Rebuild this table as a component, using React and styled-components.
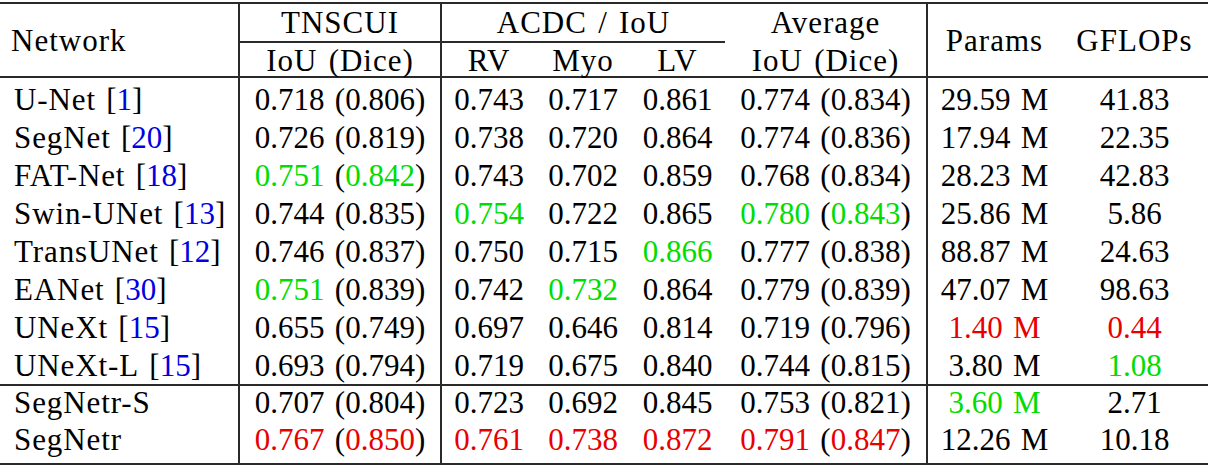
import React from "react";
import styled, { createGlobalStyle } from "styled-components";

const LINE = "#2a2a2a";
const COLORS = { g: "#00dd00", r: "#e80000" };
const SERIF = `"Liberation Serif", "Times New Roman", serif`;

const GlobalStyle = createGlobalStyle`
  html, body { margin: 0; padding: 0; background: #fff; }
  body { font-family: ${SERIF}; color: #000; }
  *, *::before, *::after { box-sizing: border-box; }
`;

const Page = styled.div`
  padding-top: 2px;
`;

const Table = styled.div`
  display: grid;
  width: 1208px;
  grid-template-columns: 238px 202px 96px 94px 95px 203px 133px 147px;
  grid-template-rows: 39px 35px repeat(7, 38px) 42px 35px 44px;
  border-top: 2px solid ${LINE};
  font-family: ${SERIF};
  font-size: 31px;
  line-height: 31px;
  word-spacing: 2.5px;
`;

const Cell = styled.div`
  white-space: nowrap;
  padding-top: ${(p) => p.$pt ?? 0}px;
  padding-left: ${(p) => p.$pl ?? 0}px;
  text-align: ${(p) => p.$align || "center"};
  border-left: ${(p) => (p.$bl ? `2px solid ${LINE}` : "none")};
  border-right: ${(p) => (p.$br ? `2px solid ${LINE}` : "none")};
  border-bottom: ${(p) => (p.$rule ? `2px solid ${LINE}` : "none")};
`;

const HeadCell = styled(Cell)`
  grid-column: ${(p) => p.$col};
  grid-row: ${(p) => p.$row};
  letter-spacing: 1px;
`;

const SpanHead = styled(HeadCell)`
  display: flex;
  align-items: center;
  justify-content: ${(p) => (p.$align === "left" ? "flex-start" : "center")};
  padding-top: 0;
`;

const NameText = styled.span`
  letter-spacing: 0.9px;
`;

const Cite = styled.span`
  color: #0000e0;
`;

const Hl = styled.span`
  color: ${(p) => COLORS[p.$c] || "inherit"};
`;

const Val = ({ v }) => {
  const m = /^([gr]):(.*)$/.exec(v);
  if (m) return <Hl $c={m[1]}>{m[2]}</Hl>;
  return <>{v}</>;
};

const Pair = ({ a, b }) => (
  <>
    <Val v={a} /> (<Val v={b} />)
  </>
);

const rows = [
  ["U-Net", "1", ["0.718", "0.806"], ["0.743", "0.717", "0.861"], ["0.774", "0.834"], "29.59 M", "41.83"],
  ["SegNet", "20", ["0.726", "0.819"], ["0.738", "0.720", "0.864"], ["0.774", "0.836"], "17.94 M", "22.35"],
  ["FAT-Net", "18", ["g:0.751", "g:0.842"], ["0.743", "0.702", "0.859"], ["0.768", "0.834"], "28.23 M", "42.83"],
  ["Swin-UNet", "13", ["0.744", "0.835"], ["g:0.754", "0.722", "0.865"], ["g:0.780", "g:0.843"], "25.86 M", "5.86"],
  ["TransUNet", "12", ["0.746", "0.837"], ["0.750", "0.715", "g:0.866"], ["0.777", "0.838"], "88.87 M", "24.63"],
  ["EANet", "30", ["g:0.751", "0.839"], ["0.742", "g:0.732", "0.864"], ["0.779", "0.839"], "47.07 M", "98.63"],
  ["UNeXt", "15", ["0.655", "0.749"], ["0.697", "0.646", "0.814"], ["0.719", "0.796"], "r:1.40 M", "r:0.44"],
  ["UNeXt-L", "15", ["0.693", "0.794"], ["0.719", "0.675", "0.840"], ["0.744", "0.815"], "3.80 M", "g:1.08"],
  ["SegNetr-S", null, ["0.707", "0.804"], ["0.723", "0.692", "0.845"], ["0.753", "0.821"], "g:3.60 M", "2.71"],
  ["SegNetr", null, ["r:0.767", "r:0.850"], ["r:0.761", "r:0.738", "r:0.872"], ["r:0.791", "r:0.847"], "12.26 M", "10.18"],
];

const PADS = [6, 6, 6, 6, 6, 6, 6, 6, 1, 3];
const RULES = [7, 9];

export default function App() {
  return (
    <Page>
      <GlobalStyle />
      <Table>
        <SpanHead $col="1" $row="1 / span 2" $align="left" $pl={11} $rule>
          Network
        </SpanHead>
        <HeadCell $col="2" $row="1" $pt={3} $bl $rule>
          TNSCUI
        </HeadCell>
        <HeadCell $col="3 / span 3" $row="1" $pt={3} $bl $rule>
          ACDC / IoU
        </HeadCell>
        <HeadCell $col="6" $row="1" $pt={3} $br>
          Average
        </HeadCell>
        <SpanHead $col="7" $row="1 / span 2" $rule>
          Params
        </SpanHead>
        <SpanHead $col="8" $row="1 / span 2" $rule>
          GFLOPs
        </SpanHead>

        <HeadCell $col="2" $row="2" $pt={2} $bl $rule>
          IoU (Dice)
        </HeadCell>
        <HeadCell $col="3" $row="2" $pt={2} $bl $rule>
          RV
        </HeadCell>
        <HeadCell $col="4" $row="2" $pt={2} $rule>
          Myo
        </HeadCell>
        <HeadCell $col="5" $row="2" $pt={2} $rule>
          LV
        </HeadCell>
        <HeadCell $col="6" $row="2" $pt={2} $br $rule>
          IoU (Dice)
        </HeadCell>

        {rows.map(([name, cite, tn, acdc, avg, params, gf], i) => {
          const pt = PADS[i];
          const rule = RULES.includes(i);
          return (
            <React.Fragment key={name}>
              <Cell $align="left" $pl={14} $pt={pt} $rule={rule}>
                <NameText>{name}</NameText>
                {cite && (
                  <>
                    {" "}[<Cite>{cite}</Cite>]
                  </>
                )}
              </Cell>
              <Cell $pt={pt} $bl $rule={rule}>
                <Pair a={tn[0]} b={tn[1]} />
              </Cell>
              <Cell $pt={pt} $bl $rule={rule}>
                <Val v={acdc[0]} />
              </Cell>
              <Cell $pt={pt} $rule={rule}>
                <Val v={acdc[1]} />
              </Cell>
              <Cell $pt={pt} $rule={rule}>
                <Val v={acdc[2]} />
              </Cell>
              <Cell $pt={pt} $br $rule={rule}>
                <Pair a={avg[0]} b={avg[1]} />
              </Cell>
              <Cell $pt={pt} $rule={rule}>
                <Val v={params} />
              </Cell>
              <Cell $pt={pt} $rule={rule}>
                <Val v={gf} />
              </Cell>
            </React.Fragment>
          );
        })}
      </Table>
    </Page>
  );
}
